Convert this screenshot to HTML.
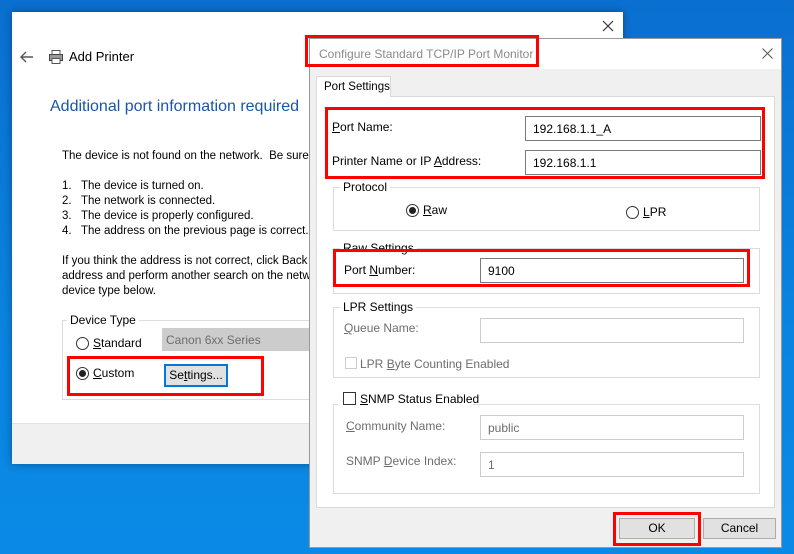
<!DOCTYPE html>
<html><head><style>
*{box-sizing:border-box;margin:0;padding:0}
body{width:794px;height:554px;overflow:hidden;position:relative;font-family:"Liberation Sans",sans-serif;font-size:12px;color:#000;background:linear-gradient(180deg,#0a6fd0 0%,#0a84e0 60%,#0a8ae6 100%)}
.a{position:absolute;white-space:nowrap}
.win{left:12px;top:12px;width:611px;height:452px;background:#fff;box-shadow:0 0 8px rgba(0,0,0,.35)}
.gb{border:1px solid #dcdcdc}
.lg{background:#fff;padding:0 3px}
.inp{background:#fff;border:1px solid #7a7a7a;padding:5px 7px;font-size:12px}
.dis{border-color:#ccc;color:#6d6d6d}
.red{border:3px solid #f00}
.rad{width:13px;height:13px;border:1px solid #333;border-radius:50%;background:#fff}
.rad.on::after{content:"";position:absolute;left:2px;top:2px;width:7px;height:7px;border-radius:50%;background:#222}
.btn{background:#e1e1e1;border:1px solid #adadad;text-align:center;line-height:19px}
.g{color:#6d6d6d}
u{text-decoration:underline}
</style></head><body>
<div class="a win">
 <svg class="a" style="left:590px;top:8px" width="12" height="12" viewBox="0 0 12 12"><path d="M1 1L11 11M11 1L1 11" stroke="#333" stroke-width="1.2"/></svg>
 <svg class="a" style="left:8px;top:39px" width="14" height="12" viewBox="0 0 14 12"><path d="M13 6H1M6 1L1 6L6 11" stroke="#555" stroke-width="1.4" fill="none"/></svg>
 <svg class="a" style="left:36px;top:37px" width="16" height="16" viewBox="0 0 16 16"><rect x="4" y="1.5" width="8" height="4" fill="#fff" stroke="#555"/><rect x="1.5" y="5.5" width="13" height="6" fill="#999" stroke="#444"/><rect x="4" y="9.5" width="8" height="5" fill="#fff" stroke="#555"/></svg>
 <div class="a" style="left:57px;top:37px;font-size:13px">Add Printer</div>
 <div class="a" style="left:38px;top:86px;font-size:16px;color:#1a56a8">Additional port information required</div>
 <div class="a" style="left:50px;top:137px;line-height:15px;font-size:11.5px">The device is not found on the network.&nbsp; Be sure that:<br><br>1.&nbsp;&nbsp; The device is turned on.<br>2.&nbsp;&nbsp; The network is connected.<br>3.&nbsp;&nbsp; The device is properly configured.<br>4.&nbsp;&nbsp; The address on the previous page is correct.<br><br>If you think the address is not correct, click Back to return to the previous page. Then correct the<br>address and perform another search on the network. If you are sure the address is correct, select the<br>device type below.</div>
 <div class="a gb" style="left:50px;top:308px;width:300px;height:80px"></div>
 <div class="a lg" style="left:55px;top:301px">Device Type</div>
 <div class="a rad" style="left:64px;top:325px"></div><div class="a" style="left:81px;top:324px"><u>S</u>tandard</div>
 <div class="a" style="left:150px;top:316px;width:160px;height:23px;background:#ccc;color:#6d6d6d;padding:5px 4px">Canon 6xx Series</div>
 <div class="a rad on" style="left:64px;top:355px"></div><div class="a" style="left:81px;top:354px"><u>C</u>ustom</div>
 <div class="a btn" style="left:152px;top:352px;width:64px;height:23px;border:2px solid #0078d7">Se<u>t</u>tings...</div>
 <div class="a" style="left:0;top:411px;width:611px;height:41px;background:#f0f0f0;border-top:1px solid #e0e0e0"></div>
</div>
<div class="a red" style="left:67px;top:356px;width:197px;height:40px"></div>

<div class="a" style="left:309px;top:38px;width:473px;height:510px;background:#f0f0f0;border:1px solid #999">
 <div class="a" style="left:0;top:0;width:471px;height:30px;background:#fff"></div>
 <div class="a" style="left:9px;top:8px;font-size:12px;color:#8a8a8a">Configure Standard TCP/IP Port Monitor</div>
 <svg class="a" style="left:452px;top:9px" width="11" height="11" viewBox="0 0 11 11"><path d="M0.5 0.5L10.5 10.5M10.5 0.5L0.5 10.5" stroke="#555" stroke-width="1"/></svg>
 <div class="a" style="left:6px;top:57px;width:459px;height:412px;background:#fff;border:1px solid #d9d9d9"></div>
 <div class="a" style="left:6px;top:37px;width:75px;height:21px;background:#fff;border:1px solid #d9d9d9;border-bottom:none;padding:4px 7px;font-size:11.5px">Port Settings</div>
 <div class="a" style="left:22px;top:81px"><u>P</u>ort Name:</div>
 <div class="a inp" style="left:215px;top:77px;width:236px;height:25px">192.168.1.1_A</div>
 <div class="a" style="left:22px;top:115px">Printer Name or IP <u>A</u>ddress:</div>
 <div class="a inp" style="left:215px;top:111px;width:236px;height:25px">192.168.1.1</div>
 <div class="a gb" style="left:23px;top:148px;width:427px;height:44px"></div>
 <div class="a lg" style="left:30px;top:141px">Protocol</div>
 <div class="a rad on" style="left:96px;top:165px"></div><div class="a" style="left:113px;top:164px"><u>R</u>aw</div>
 <div class="a rad" style="left:316px;top:167px"></div><div class="a" style="left:333px;top:166px"><u>L</u>PR</div>
 <div class="a gb" style="left:23px;top:209px;width:427px;height:46px"></div>
 <div class="a lg" style="left:30px;top:202px">Raw Settings</div>
 <div class="a" style="left:34px;top:224px">Port <u>N</u>umber:</div>
 <div class="a inp" style="left:170px;top:219px;width:264px;height:25px">9100</div>
 <div class="a gb" style="left:23px;top:268px;width:427px;height:71px"></div>
 <div class="a lg" style="left:30px;top:261px">LPR Settings</div>
 <div class="a g" style="left:34px;top:282px"><u>Q</u>ueue Name:</div>
 <div class="a inp dis" style="left:170px;top:279px;width:264px;height:25px"></div>
 <div class="a" style="left:35px;top:318px;width:12px;height:12px;border:1px solid #ccc"></div><div class="a g" style="left:50px;top:318px">LPR <u>B</u>yte Counting Enabled</div>
 <div class="a gb" style="left:23px;top:365px;width:427px;height:90px"></div>
 <div class="a lg" style="left:28px;top:353px;width:135px;height:16px"></div>
 <div class="a" style="left:33px;top:353px;width:13px;height:13px;border:1px solid #333;background:#fff"></div><div class="a" style="left:50px;top:353px"><u>S</u>NMP Status Enabled</div>
 <div class="a g" style="left:36px;top:380px"><u>C</u>ommunity Name:</div>
 <div class="a inp dis" style="left:170px;top:376px;width:264px;height:25px">public</div>
 <div class="a g" style="left:36px;top:415px">SNMP <u>D</u>evice Index:</div>
 <div class="a inp dis" style="left:170px;top:413px;width:264px;height:25px">1</div>
 <div class="a btn" style="left:309px;top:479px;width:76px;height:21px">OK</div>
 <div class="a btn" style="left:393px;top:479px;width:73px;height:21px">Cancel</div>
</div>
<div class="a red" style="left:305px;top:35px;width:234px;height:32px"></div>
<div class="a red" style="left:325px;top:107px;width:440px;height:72px"></div>
<div class="a red" style="left:333px;top:249px;width:417px;height:38px"></div>
<div class="a red" style="left:613px;top:512px;width:88px;height:34px"></div>
</body></html>
